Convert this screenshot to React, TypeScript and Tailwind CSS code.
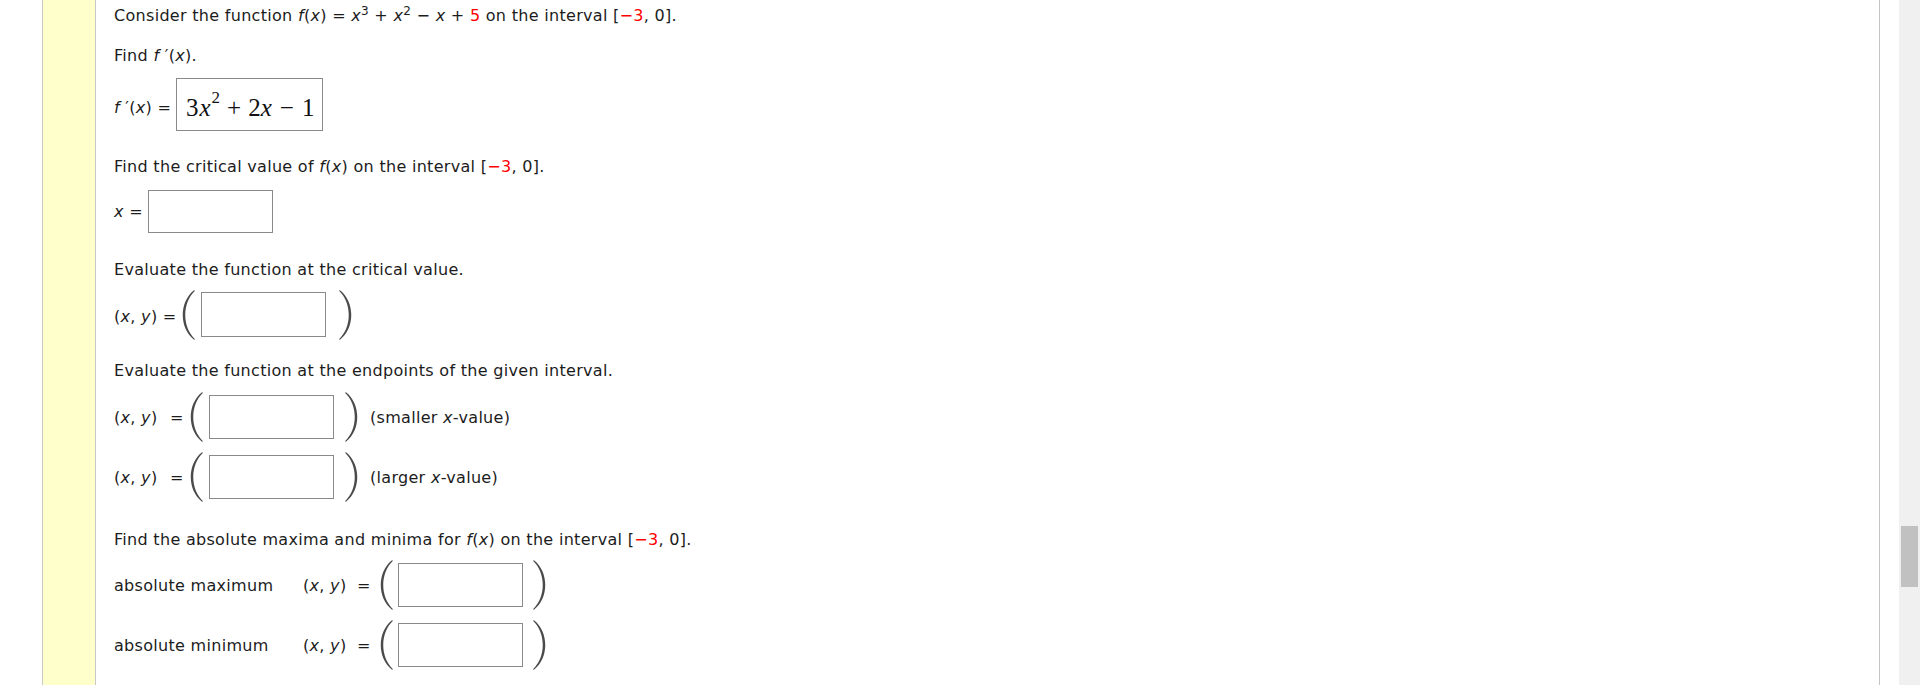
import React from "react";

// Stretchy parenthesis around an answer box (MathJax-style delimiter).
function Paren({ right = false }: { right?: boolean }) {
  return (
    <svg
      viewBox="0 0 13 50"
      className={right ? "h-[50px] w-[13px] shrink-0 -scale-x-100" : "h-[50px] w-[13px] shrink-0"}
    >
      <path d="M12 0.3 C -3 12, -3 38, 12 49.7 L 13 49.2 C 0 37, 0 13, 13 0.8 Z" fill="#4a4a4a" />
    </svg>
  );
}

function AnswerBox({ h = "h-[44px]" }: { h?: string }) {
  return <div className={`${h} w-[125px] shrink-0 border border-[#8a8a8a] bg-white`} />;
}

function Red({ children }: { children: React.ReactNode }) {
  return <span className="text-[#ff0000]">{children}</span>;
}

function XY() {
  return (
    <>
      (<i>x</i>, <i>y</i>)
    </>
  );
}

export default function App() {
  return (
    <div className="flex h-[685px] w-full overflow-hidden bg-white font-['DejaVu_Sans',Verdana,sans-serif] text-[16px] leading-[19px] tracking-[0.3px] text-[#1c1c1c]">
      <div className="w-[42px] shrink-0" />
      <div className="w-[54px] shrink-0 border-x border-[#c8c8c8] bg-[#ffffcc]" />

      <main className="flex min-w-0 flex-1 flex-col pt-[6px] pl-[18px]">
        <p>
          Consider the function <i>f</i>(<i>x</i>) = <i>x</i>
          <sup>3</sup> + <i>x</i>
          <sup>2</sup> − <i>x</i> + <Red>5</Red> on the interval [<Red>−3</Red>, 0].
        </p>

        <p className="mt-[21px]">
          Find <i>f</i> ′(<i>x</i>).
        </p>

        <div className="mt-[13px] flex items-center">
          <span className="w-[62px] shrink-0 pt-[6px]">
            <i>f</i> ′(<i>x</i>) =
          </span>
          <div className="h-[53px] w-[147px] shrink-0 border border-[#8a8a8a] pt-[6px] pl-[9px] font-['Liberation_Serif','Times_New_Roman',serif] text-[25px] leading-[45px] tracking-normal text-[#111]">
            <span>3</span>
            <i className="ml-[1px]">x</i>
            <span className="ml-[1px] align-[13px] text-[17px] leading-none">2</span>
            <span className="mx-[7px]">+</span>
            <span>2</span>
            <i>x</i>
            <span className="mx-[8px]">−</span>
            <span>1</span>
          </div>
        </div>

        <p className="mt-[26px]">
          Find the critical value of <i>f</i>(<i>x</i>) on the interval [<Red>−3</Red>, 0].
        </p>

        <div className="mt-[14px] flex items-center">
          <span className="w-[34px] shrink-0">
            <i>x</i> =
          </span>
          <AnswerBox h="h-[43px]" />
        </div>

        <p className="mt-[27px]">Evaluate the function at the critical value.</p>

        <div className="mt-[13px] flex h-[45px] items-center">
          <span className="w-[68px] shrink-0 pt-[4px]">
            <XY /> =
          </span>
          <Paren />
          <div className="ml-[6px]">
            <AnswerBox h="h-[45px]" />
          </div>
          <div className="ml-[13px]">
            <Paren right />
          </div>
        </div>

        <p className="mt-[24px]">Evaluate the function at the endpoints of the given interval.</p>

        {[
          { label: "smaller", mt: "mt-[15px]" },
          { label: "larger", mt: "mt-[16px]" },
        ].map((r) => (
          <div key={r.label} className={`${r.mt} flex h-[44px] items-center`}>
            <span className="w-[56px] shrink-0">
              <XY />
            </span>
            <span className="w-[20px] shrink-0">=</span>
            <Paren />
            <div className="ml-[6px]">
              <AnswerBox />
            </div>
            <div className="ml-[11px]">
              <Paren right />
            </div>
            <span className="ml-[12px]">
              ({r.label} <i>x</i>-value)
            </span>
          </div>
        ))}

        <p className="mt-[31px]">
          Find the absolute maxima and minima for <i>f</i>(<i>x</i>) on the interval [<Red>−3</Red>, 0].
        </p>

        {[
          { label: "absolute maximum", mt: "mt-[14px]" },
          { label: "absolute minimum", mt: "mt-[16px]" },
        ].map((r) => (
          <div key={r.label} className={`${r.mt} flex h-[44px] items-center`}>
            <span className="w-[189px] shrink-0">{r.label}</span>
            <span className="w-[54px] shrink-0">
              <XY />
            </span>
            <span className="w-[23px] shrink-0">=</span>
            <Paren />
            <div className="ml-[5px]">
              <AnswerBox />
            </div>
            <div className="ml-[10px]">
              <Paren right />
            </div>
          </div>
        ))}
      </main>

      <div className="w-[20px] shrink-0 border-l border-[#c4c4c4]" />
      <div className="flex w-[21px] shrink-0 flex-col bg-[#f0f0f0] px-[2px] pt-[526px]">
        <div className="h-[61px] bg-[#c1c1c1]" />
      </div>
    </div>
  );
}
